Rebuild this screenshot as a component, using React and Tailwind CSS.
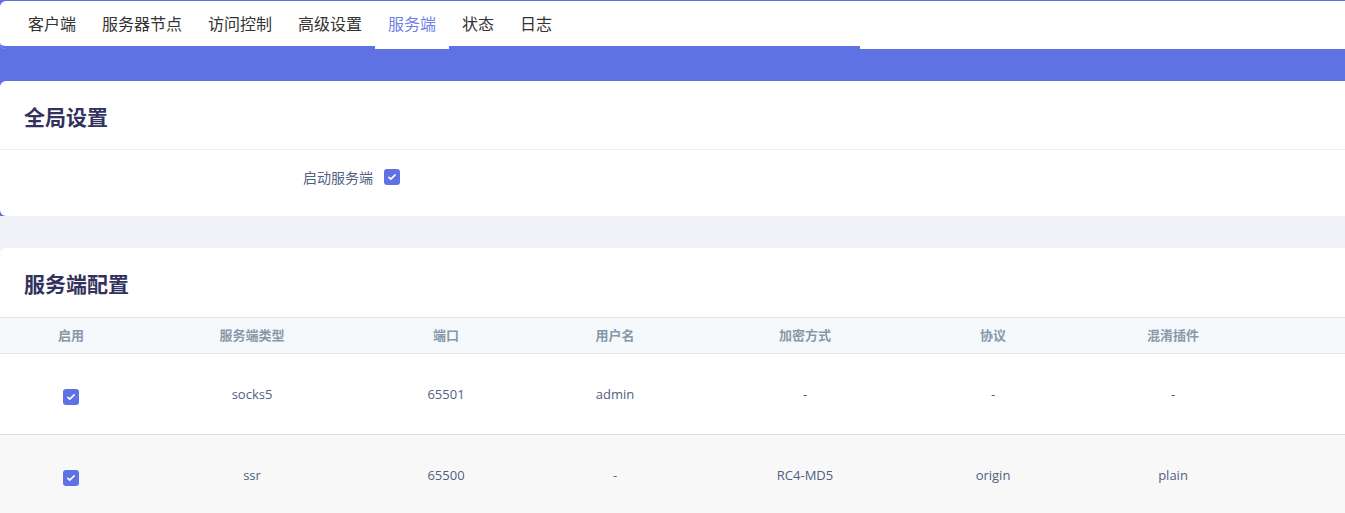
import React from "react";

const font = { fontFamily: '"Open Sans", "Noto Sans CJK SC", sans-serif' };

function Check() {
  return (
    <span className="inline-flex h-4 w-4 items-center justify-center rounded-[3px] bg-[#5e72e4]">
      <svg viewBox="0 0 16 16" className="h-[10px] w-[10px]" fill="none">
        <path d="M3 8.5l3 3 7-7" stroke="#fff" strokeWidth="2.6" strokeLinecap="round" strokeLinejoin="round" />
      </svg>
    </span>
  );
}

const tabs = ["客户端", "服务器节点", "访问控制", "高级设置", "服务端", "状态", "日志"];
const cols = "grid-cols-[142px_220px_168px_170px_210px_166px_194px_1fr]";
const headers = ["启用", "服务端类型", "端口", "用户名", "加密方式", "协议", "混淆插件", ""];
const rows = [
  ["socks5", "65501", "admin", "-", "-", "-"],
  ["ssr", "65500", "-", "RC4-MD5", "origin", "plain"],
];

export default function App() {
  return (
    <div className="min-h-[513px] w-[1345px] overflow-hidden bg-[#f1f2f7]" style={font}>
      <div className="bg-[#5e72e4] pt-px">
        <div className="flex h-[48px] rounded-l-md bg-white">
          <div className="flex h-full w-[860px] rounded-bl-md border-b-[3px] border-[#5e72e4] pl-[15px]">
            {tabs.map((t, i) => (
              <div
                key={t}
                className={
                  "relative flex h-full items-center px-[13px] pt-[1px] text-[16px] " +
                  (i === 4 ? "text-[#6f7fe8]" : "text-[#333]")
                }
              >
                {t}
                {i === 4 && <span className="absolute -bottom-[3px] left-0 right-0 h-[3px] bg-white" />}
              </div>
            ))}
          </div>
        </div>
        <div className="h-[32px]" />
        <div className="rounded-l-md bg-white">
          <div className="flex h-[69px] items-center border-b border-[#eeeff2] px-6 pt-[5px]">
            <h2 className="text-[21px] font-bold text-[#32325d]">全局设置</h2>
          </div>
          <div className="flex h-[66px] items-center pb-[12px]">
            <div className="w-[373px] text-right text-[14px] text-[#525f7f]">启动服务端</div>
            <div className="ml-[11px] flex items-center">
              <Check />
            </div>
          </div>
        </div>
      </div>
      <div className="pt-[32px]">
        <div className="rounded-tl-md bg-white">
          <div className="flex h-[69px] items-center px-6 pt-[4px]">
            <h2 className="text-[21px] font-bold text-[#32325d]">服务端配置</h2>
          </div>
          <div className={`grid ${cols} h-[37px] items-center border-y border-[#e3e6ea] bg-[#f6f9fc]`}>
            {headers.map((h, i) => (
              <div key={i} className="text-center text-[13px] font-semibold text-[#8898aa]">
                {h}
              </div>
            ))}
          </div>
          {rows.map((r, ri) => (
            <div
              key={ri}
              className={`grid ${cols} h-[81px] items-center border-b border-[#dee0e3] ${ri === 1 ? "bg-[#f8f8f8]" : "bg-white"}`}
            >
              <div className="flex justify-center pt-[5px]">
                <Check />
              </div>
              {r.map((c, ci) => (
                <div key={ci} className="pt-[2px] text-center text-[13px] text-[#525f7f]">
                  {c}
                </div>
              ))}
              <div />
            </div>
          ))}
        </div>
      </div>
    </div>
  );
}
